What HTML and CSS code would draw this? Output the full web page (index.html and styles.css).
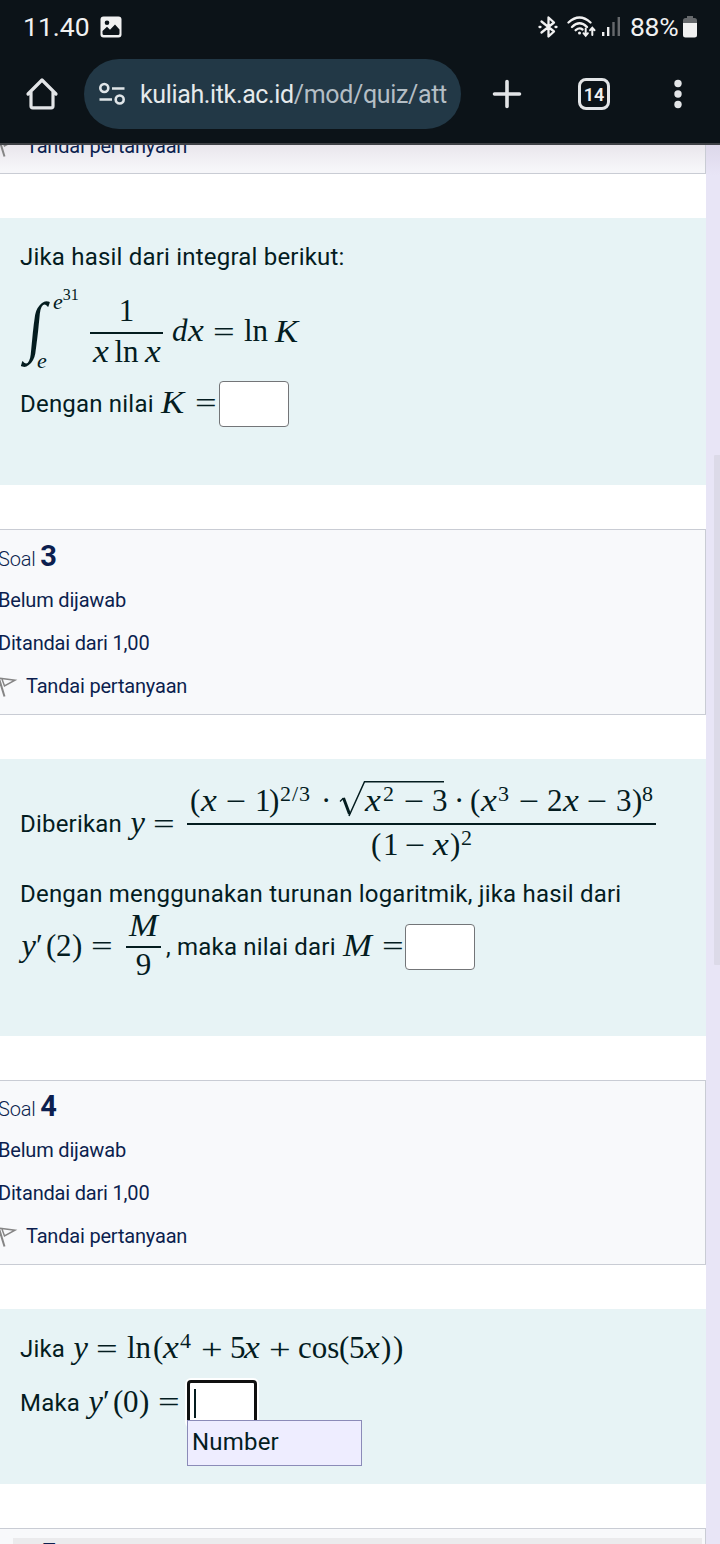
FILE: index.html
```html
<!DOCTYPE html>
<html lang="id">
<head>
<meta charset="utf-8">
<title>Kuis</title>
<link rel="stylesheet" href="styles.css">
</head>
<body>
<div class="screen">
  <header class="chrome">
    <div class="status">
      <span class="clock">11.40</span>
      <svg class="pic" width="22" height="22" viewBox="0 0 22 22"><rect x="0.5" y="0.5" width="21" height="21" rx="3" fill="#f1f1f1"/><circle cx="7" cy="6.8" r="2.3" fill="#0c1318"/><path d="M2.5 17.5V15L7 10.8l3 3 5-5.3 4.5 5v4q0 1.500-1.500 1.500H4q-1.500 0-1.500-1.500z" fill="#0c1318"/></svg>
      <svg class="bt" width="20" height="24" viewBox="0 0 20 24" fill="none" stroke="#f1f1f1" stroke-width="2.300" stroke-linejoin="round" stroke-linecap="round"><path d="M3.500 6.500L16 16.500L10.500 21.500V2.500L16 7.500L3.500 17.500M1.500 12h1M17.500 12h1"/></svg>
      <svg class="wifi" width="30" height="24" viewBox="0 0 30 24" fill="none" stroke="#f1f1f1" stroke-width="2.300" stroke-linecap="round"><path d="M1.500 7.500Q12.500-2.500 23.500 7.500M5 12Q12.500 4.500 20 12M8.700 15.200Q12.500 12 15.500 14.500"/><circle cx="12.500" cy="18" r="1.500" fill="#f1f1f1" stroke="none"/><path stroke-width="2" d="M18.700 13.500v7M16.500 18.200l2.200 2.500 2.200-2.500M25.300 20v-7M23.100 15.200l2.200-2.500 2.200 2.500"/></svg>
      <svg class="signal" width="20" height="22" viewBox="0 0 20 22"><path d="M1 16h2.400v4H1zM6 11h2.400v9H6z" fill="#f1f1f1"/><path d="M11.300 6h2.400v14h-2.400zM16.600 1H19v19h-2.400z" fill="#66696c"/></svg>
      <span class="pct">88%</span>
      <svg class="battery" width="16" height="24" viewBox="0 0 16 24"><path d="M5 1h6v2h1.500Q15 3 15 5.500V9H1V5.500Q1 3 3.500 3H5z" fill="#66696c"/><path d="M1 8h14v12q0 2.500-2.500 2.500h-9Q1 22.500 1 20z" fill="#f1f1f1"/></svg>
    </div>
    <div class="toolbar">
      <svg class="home" width="34" height="34" viewBox="0 0 34 34" fill="none" stroke="#e3e5e7" stroke-width="3.200" stroke-linejoin="round" stroke-linecap="round"><path d="M3 17L17 3l14 14M6 15v14q0 1.800 1.800 1.800h18.400Q28 30.800 28 29V15"/></svg>
      <div class="omnibox">
        <svg width="28" height="24" viewBox="0 0 28 24" fill="none" stroke="#e0e5e8" stroke-width="2.600"><circle cx="6.300" cy="6" r="4"/><path d="M14 6.500h12.500M1.500 17.500h12.500"/><circle cx="21.700" cy="17.500" r="4"/></svg>
        <span class="url">kuliah.itk.ac.id<span>/mod/quiz/att</span></span>
      </div>
      <svg class="plus" width="30" height="30" viewBox="0 0 30 30" stroke="#e3e5e7" stroke-width="3.600" stroke-linecap="round"><path d="M15 2.500v25M2.500 15h25"/></svg>
      <div class="tabs">14</div>
      <svg class="dots" width="8" height="30" viewBox="0 0 8 30" fill="#e3e5e7"><circle cx="4" cy="4.500" r="3.700"/><circle cx="4" cy="15" r="3.700"/><circle cx="4" cy="25.500" r="3.700"/></svg>
    </div>
  </header>

  <div class="viewport">
    <main>
      <section class="info first">
        <p class="no">Soal <b>2</b></p><p>Belum dijawab</p><p>Ditandai dari 1,00</p>
        <p class="flag"><svg width="20" height="22" viewBox="0 0 20 22" fill="none" stroke="#858585"><path stroke-width="2" d="M1 2.500L6.500 20.500"/><path stroke-width="1.500" d="M2 2.200L17 4.200L6.500 10L3.800 2.500"/></svg>Tandai pertanyaan</p>
      </section>

      <section class="question q2">
        <div class="line">Jika hasil dari integral berikut:</div>
        <div class="line int-line">
          <span class="integral">∫</span>
          <span class="limits"><span class="upper"><i>e</i><sup>31</sup></span><span class="lower"><i>e</i></span></span>
          <span class="frac f1"><span class="num"><span class="n">1</span></span><span class="bar"></span><span class="den"><i class="x w22">x</i><span class="n w30">ln</span><i class="x w15">x</i></span></span>
          <i class="n w16">d</i><i class="x w25">x</i><span class="eq w31">=</span><span class="n w31">ln</span><i class="cap">K</i>
        </div>
        <div class="line answer"><span class="w141">Dengan nilai</span><i class="cap w34">K</i><span class="eq w24">=</span><span class="input"></span></div>
      </section>

      <section class="info low">
        <p class="no">Soal <b>3</b></p><p>Belum dijawab</p><p>Ditandai dari 1,00</p>
        <p class="flag"><svg width="20" height="22" viewBox="0 0 20 22" fill="none" stroke="#858585"><path stroke-width="2" d="M1 2.500L6.500 20.500"/><path stroke-width="1.500" d="M2 2.200L17 4.200L6.500 10L3.800 2.500"/></svg>Tandai pertanyaan</p>
      </section>

      <section class="question q3">
        <div class="line"><span class="w109">Diberikan</span><i class="y w24">y</i><span class="eq w34">=</span>
          <span class="frac f3"><span class="num start"><span class="n w11">(</span><i class="x w25">x</i><span class="mi w29">−</span><span class="n w14">1</span><span class="n w11">)</span><span class="sup two-thirds w41">2/3</span><span class="n w18">·</span><svg class="root" width="105" height="40" viewBox="0 0 105 40" fill="none" stroke="#041c1f"><path stroke-width="1.300" d="M1 21.500L4.500 18"/><path stroke-width="3" d="M4.500 18L10.500 34"/><path stroke-width="1.500" d="M10 36L25.500 1.700H105"/></svg><i class="x w18">x</i><span class="sup w21">2</span><span class="mi w28">−</span><span class="n w22">3</span><span class="n w16">·</span><span class="n w11">(</span><i class="x w17">x</i><span class="sup w21">3</span><span class="mi w28">−</span><span class="n w16">2</span><i class="x w24">x</i><span class="mi w29">−</span><span class="n w16">3</span><span class="n w10">)</span><span class="sup">8</span></span><span class="bar"></span><span class="den"><span class="n w12">(</span><span class="n w22">1</span><span class="mi w28">−</span><i class="x w17">x</i><span class="n w11">)</span><span class="sup w11">2</span></span></span>
        </div>
        <div class="line second">Dengan menggunakan turunan logaritmik, jika hasil dari</div>
        <div class="line answer"><i class="y w16">y</i><span class="n w10">′</span><span class="n w10">(</span><span class="n w16">2</span><span class="n w19">)</span><span class="eq w35">=</span><span class="frac f9"><span class="num"><i class="cap">M</i></span><span class="bar"></span><span class="den"><span class="n">9</span></span></span><span class="w178">, maka nilai dari</span><i class="cap w39">M</i><span class="eq w23">=</span><span class="input"></span></div>
      </section>

      <section class="info short">
        <p class="no">Soal <b>4</b></p><p>Belum dijawab</p><p>Ditandai dari 1,00</p>
        <p class="flag"><svg width="20" height="22" viewBox="0 0 20 22" fill="none" stroke="#858585"><path stroke-width="2" d="M1 2.500L6.500 20.500"/><path stroke-width="1.500" d="M2 2.200L17 4.200L6.500 10L3.800 2.500"/></svg>Tandai pertanyaan</p>
      </section>

      <section class="question q4">
        <div class="line"><span class="w52">Jika</span><i class="y w24">y</i><span class="eq w31">=</span><span class="n w26">ln</span><span class="n w10">(</span><i class="x w17">x</i><span class="sup w21">4</span><span class="eq w29">+</span><span class="n w14">5</span><i class="x w25">x</i><span class="eq w29">+</span><span class="n w41">cos</span><span class="n w10">(</span><span class="n w15">5</span><i class="x w17">x</i><span class="n w12">)</span><span class="n">)</span></div>
        <div class="line answer"><span class="w67">Maka</span><i class="y w16">y</i><span class="n w10">′</span><span class="n w10">(</span><span class="n w16">0</span><span class="n w19">)</span><span class="eq w29">=</span><span class="input focus"><span class="caret"></span><span class="hint">Number</span></span></div>
      </section>

      <section class="info last">
        <div class="strip"><p class="no">Soal <b>5</b></p></div>
      </section>
    </main>
    <aside><div class="thumb"></div></aside>
  </div>
</div>
</body>
</html>
```
FILE: styles.css
```css
* { box-sizing: border-box; }
body { margin: 0; background: #fff; font-family: Roboto, "Liberation Sans", sans-serif; }
p { margin: 0; }
.screen { width: 720px; height: 1544px; overflow: hidden; display: flex; flex-direction: column; }

.chrome { flex: none; height: 145px; background: #0c1318; border-bottom: 2px solid #3f4246; color: #f1f1f1; }
.status { display: flex; align-items: center; height: 54px; padding-left: 23px; }
.status svg, .toolbar svg { flex: none; }
.clock { width: 77px; margin-top: -2px; font-size: 26.5px; }
.bt { margin-left: 416px; }
.wifi { margin-left: 9px; }
.signal { margin-left: 4px; }
.pct { width: 50px; margin: -2px 0 0 9px; font-size: 26.500px; letter-spacing: -.3px; white-space: nowrap; }
.battery { margin-left: 2px; }
.toolbar { display: flex; align-items: center; height: 80px; padding-left: 25px; }
.omnibox { display: flex; align-items: center; width: 377px; height: 70px; margin-left: 25px; padding-left: 14px; border-radius: 35px; background: #223846; }
.url { margin-left: 14px; font-size: 25px; letter-spacing: -.36px; color: #e6eaec; white-space: nowrap; }
.url span { color: #b4bec5; }
.plus { margin-left: 31px; }
.tabs { width: 32px; height: 32px; margin-left: 56px; border: 3px solid #e3e5e7; border-radius: 8px; font-size: 18px; font-weight: 600; line-height: 27px; text-align: center; }
.dots { margin-left: 64px; }

.viewport { display: flex; flex: 1; min-height: 0; overflow: hidden; background: linear-gradient(#ddd8ea, #e8e5f6 30px); }
main { flex: none; width: 706px; background: #fff; }
aside { width: 14px; padding: 310px 0 0 8px; }
.thumb { height: 510px; background: #dcdae8; border-radius: 1px 0 0 1px; }

.info { height: 186px; margin-bottom: 44px; padding: 5px 0 0; border: solid #c9ccd4; border-width: 1px 1px 1px 0; background: #f8f9fb; color: #0c1f4f; font-size: 20px; line-height: 43px; letter-spacing: -.19px; white-space: nowrap; }
.info.first { margin-top: -157px; background: linear-gradient(#f8f9fb 156px, #e9e6ec 156px, #f6f6f9 180px); }
.info.short { height: 185px; }
.info p { height: 43px; margin-left: -2px; }
.info.low .no { height: 44px; }
.info.first .no { height: 45px; }
.no { font-weight: 300; }
.short .no { position: relative; top: -1px; }
.no b { font-size: 29px; font-weight: 700; }
.flag { display: flex; align-items: center; }
.flag svg { margin-right: 8px; }
.last { padding-top: 9px; }
.strip { display: flow-root; height: 60px; margin: 0 3px 0 13px; background: #ebebed; }
.info .strip p { margin: -5px 0 0 -15px; }

.question { margin-bottom: 44px; padding-left: 20px; background: #e7f3f5; color: #041c1f; font-size: 24px; line-height: 40px; letter-spacing: .2px; }
.q2 { height: 267px; padding-top: 19px; }
.q3 { height: 277px; padding-top: 43px; }
.q4 { height: 175px; padding-top: 18px; }
.line { display: flex; align-items: baseline; height: 40px; white-space: nowrap; }
.line > *, .num > *, .den > * { flex: none; }
.int-line { margin-top: 33px; }
.q2 .answer { margin-top: 32px; }
.second { margin-top: 32px; }
.q3 .answer { margin-top: 11px; }
.q4 .answer { margin-top: 14px; }

.n, .x, .y, .cap, .eq, .mi, .sup, .limits, .integral { font-family: "Liberation Serif", serif; font-size: 31px; letter-spacing: 0; transform-origin: 0 50%; }
.n, .x, .y, .cap, .eq, .mi { position: relative; top: 1px; }
.eq, .cap { top: 2px; }
.answer > .cap, .answer > .eq { top: 1px; }
.x { transform: scaleX(1.15); }
.y { transform: translateX(1.5px) scaleX(1.05); }
.cap { transform: scaleX(1.12); }
.num .cap { margin-left: -4px; }
.eq, .mi { transform: scaleX(1.28); font-size: 30px; }
.mi { transform: scaleX(1.2); }
.sup { position: relative; top: -9px; font-size: 22px; line-height: 20px; }
.two-thirds { letter-spacing: 1px; }

.frac { display: flex; flex-direction: column; align-self: flex-start; }
.num, .den { display: flex; justify-content: center; align-items: baseline; height: 40px; }
.bar { height: 2px; background: #041c1f; }
.f1 { width: 73px; margin: -20px 9px 0 0; }
.f1 .num, .f9 .num { height: 42px; }
.f1 .den { margin-top: -3px; padding-right: 1px; }
.f3 { width: 469px; margin-top: -22px; }
.f3 .num { height: 43px; padding-left: 3px; }
.f3 .start { justify-content: flex-start; }
.f3 .den { margin-top: -1px; }
.f9 { width: 35px; margin: -21px 5px 0 0; }
.f9 .den { margin-top: -4px; }
.f9 + .w178 { width: 177px; }
.root { align-self: flex-start; margin-right: -79px; }

.integral { align-self: flex-start; width: 20px; margin: -4px 0 0; font-size: 67px; transform: translateX(6px) skewX(-6deg) scaleX(.88); transform-origin: 0 100%; }
.limits { display: flex; flex-direction: column; align-self: flex-start; width: 50px; margin-top: -23px; font-size: 22px; line-height: 30px; }
.upper { padding-left: 13px; }
.upper sup { position: relative; top: -9px; font-size: 16px; line-height: 0; vertical-align: baseline; }
.lower { margin-top: 29px; text-indent: -3px; }

.input { align-self: flex-start; width: 70px; height: 46px; margin-top: -1px; border: 1px solid #737578; border-radius: 4px; background: #fff; }
.focus { position: relative; border: 3px solid #101010; box-shadow: 0 0 0 2px #fff; }
.caret { display: block; width: 2px; height: 29px; margin: 6px 0 0 4px; background: #041c1f; }
.hint { position: absolute; left: -3px; top: 37px; width: 175px; height: 46px; padding-left: 4px; border: 1px solid #8b8bb8; background: #eeedff; line-height: 42px; }

.w10 { width: 10px; } .w11 { width: 11px; } .w12 { width: 12px; } .w14 { width: 14px; }
.w15 { width: 15px; } .w16 { width: 16px; } .w17 { width: 17px; } .w18 { width: 18px; }
.w19 { width: 19px; } .w21 { width: 21px; } .w22 { width: 22px; } .w23 { width: 23px; }
.w24 { width: 24px; } .w25 { width: 25px; } .w26 { width: 26px; } .w28 { width: 28px; }
.w29 { width: 29px; } .w30 { width: 30px; } .w31 { width: 31px; } .w34 { width: 34px; }
.w35 { width: 35px; } .w39 { width: 39px; } .w41 { width: 41px; } .w52 { width: 52px; }
.w67 { width: 67px; } .w109 { width: 109px; } .w141 { width: 141px; } .w178 { width: 178px; }
```
